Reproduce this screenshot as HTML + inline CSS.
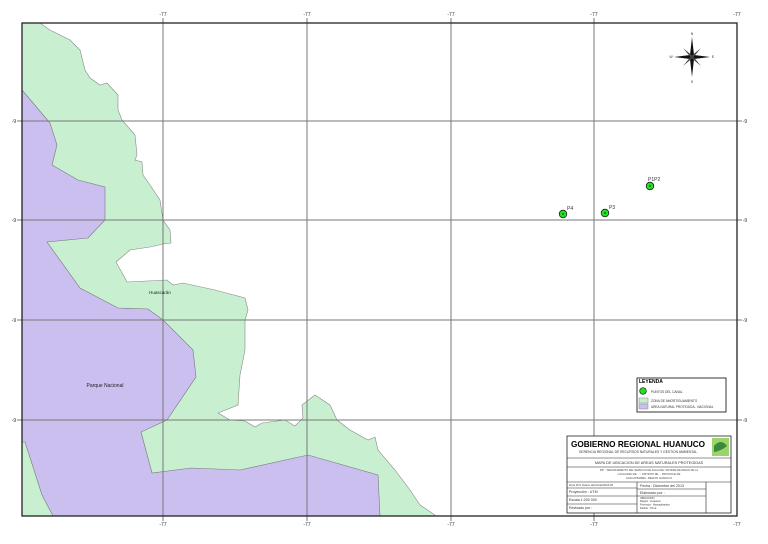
<!DOCTYPE html>
<html><head><meta charset="utf-8"><style>
html,body{margin:0;padding:0;background:#fff;}
svg{display:block;font-family:"Liberation Sans",sans-serif;}
</style></head><body>
<svg width="768" height="544" viewBox="0 0 768 544" xmlns="http://www.w3.org/2000/svg">
<rect width="768" height="544" fill="#fff"/>
<!-- green zone -->
<polygon fill="#c8f0d0" stroke="#888" stroke-width="0.6" points="22,23 40,23 50,30 70,40 80,50 85,70 90,78 100,85 107,83 118,95 118,110 122,120 135,135 137,155 135,160 142,162 143,175 150,185 160,200 163,220 170,230 171,243 163,244 150,247 130,250 116,262 126,280 127,282 167,280 173,285 183,283 215,290 245,298 248,310 245,320 245,350 240,375 238,405 218,413 230,420 245,421 255,427 262,423 285,420 295,426 303,418 302,405 315,395 330,405 337,420 350,430 368,440 375,437 378,450 395,470 410,490 420,505 435,515 435,516 22,516"/>
<!-- purple zone -->
<polygon fill="#cbbff0" stroke="#777" stroke-width="0.6" points="22,90 50,123 57,145 52,165 78,180 105,187 105,220 88,238 47,242 80,288 118,308 148,309 163,320 193,350 196,377 167,420 141,432 152,473 191,468 240,470 308,455 378,475 380,516 53,516 42,495 25,442 22,442"/>
<!-- grid -->
<g stroke="#777" stroke-width="1">
<line x1="163" y1="18" x2="163" y2="521"/><line x1="307" y1="18" x2="307" y2="521"/>
<line x1="451" y1="18" x2="451" y2="521"/><line x1="594" y1="18" x2="594" y2="521"/>
<line x1="17" y1="121" x2="742" y2="121"/><line x1="17" y1="220" x2="742" y2="220"/>
<line x1="17" y1="320" x2="742" y2="320"/><line x1="17" y1="420" x2="742" y2="420"/>
</g>
<rect x="22" y="23" width="715" height="493" fill="none" stroke="#222" stroke-width="1.3"/>
<g font-size="5" fill="#333" text-anchor="middle">
<text x="163" y="16">-77</text><text x="307" y="16">-77</text><text x="451" y="16">-77</text><text x="594" y="16">-77</text><text x="737" y="16">-77</text>
<text x="163" y="526">-77</text><text x="307" y="526">-77</text><text x="451" y="526">-77</text><text x="594" y="526">-77</text><text x="737" y="526">-77</text>
<text x="14" y="123">-9</text><text x="14" y="222">-9</text><text x="14" y="322">-9</text><text x="14" y="422">-9</text>
<text x="745" y="123">-9</text><text x="745" y="222">-9</text><text x="745" y="322">-9</text><text x="745" y="422">-9</text>
</g>
<text x="160" y="294" font-size="4.5" text-anchor="middle" fill="#222">Huascarán</text>
<text x="105" y="387" font-size="5" text-anchor="middle" fill="#222">Parque Nacional</text>
<!-- points -->
<g stroke="#222" stroke-width="0.8" fill="#22e022">
<circle cx="563" cy="214" r="3.8"/><circle cx="605" cy="213" r="3.8"/><circle cx="650" cy="186" r="3.8"/>
</g>
<g fill="#111"><circle cx="563" cy="214" r="0.8"/><circle cx="605" cy="213" r="0.8"/><circle cx="650" cy="186" r="0.8"/></g>
<g font-size="5" fill="#333"><text x="567" y="210">P4</text><text x="609" y="209">P3</text><text x="648" y="181">P1P2</text></g>
<!-- compass -->
<g transform="translate(692,57)">
<polygon points="0,-20 2,-2 0,0 -2,-2" fill="#111"/><polygon points="0,20 2,2 0,0 -2,2" fill="#111"/>
<polygon points="-18,0 -2,-2 0,0 -2,2" fill="#111"/><polygon points="18,0 2,-2 0,0 2,2" fill="#111"/>
<polygon points="9,-9 1.5,0 0,0 0,-1.5" fill="#444"/><polygon points="-9,-9 -1.5,0 0,0 0,-1.5" fill="#444"/>
<polygon points="9,9 1.5,0 0,0 0,1.5" fill="#444"/><polygon points="-9,9 -1.5,0 0,0 0,1.5" fill="#444"/>
<g font-size="3.5" fill="#333" text-anchor="middle"><text x="0" y="-22">N</text><text x="0" y="26">S</text><text x="-21" y="1">W</text><text x="21" y="1">E</text></g>
</g>
<!-- legend -->
<rect x="637" y="378" width="89" height="34" fill="#fff" stroke="#222" stroke-width="0.9"/>
<text x="639" y="383" font-size="5" font-weight="bold">LEYENDA</text>
<circle cx="643" cy="391" r="3.3" fill="#22e022" stroke="#222" stroke-width="0.7"/>
<rect x="639" y="398" width="9" height="5" fill="#c8f0d0" stroke="#888" stroke-width="0.5"/>
<rect x="639" y="404" width="9" height="5" fill="#cbbff0" stroke="#888" stroke-width="0.5"/>
<g font-size="3.2" fill="#333"><text x="651" y="393">PUNTOS DEL CANAL</text><text x="651" y="402">ZONA DE AMORTIGUAMIENTO</text><text x="651" y="408">AREA NATURAL PROTEGIDA - NACIONAL</text></g>
<!-- title block -->
<g fill="#fff" stroke="#222" stroke-width="0.8">
<rect x="567" y="436" width="164" height="77"/>
</g>
<g stroke="#222" stroke-width="0.6" fill="none">
<line x1="567" y1="458" x2="731" y2="458"/><line x1="567" y1="467" x2="731" y2="467"/><line x1="567" y1="482" x2="731" y2="482"/>
<line x1="637" y1="482" x2="637" y2="513"/><line x1="706" y1="482" x2="706" y2="513"/>
<line x1="567" y1="488" x2="637" y2="488"/><line x1="567" y1="496" x2="706" y2="496"/><line x1="567" y1="504" x2="637" y2="504"/><line x1="637" y1="489" x2="706" y2="489"/>
</g>
<rect x="712" y="438" width="17" height="18" fill="#9bd46a"/>
<path d="M714,446 q7,-8 13,0 q-6,5 -13,6z" fill="#3a8a3a"/>
<text x="638" y="447" font-size="8.2" font-weight="bold" text-anchor="middle">GOBIERNO REGIONAL HUANUCO</text>
<text x="638" y="453" font-size="3.3" text-anchor="middle" fill="#333">GERENCIA REGIONAL DE RECURSOS NATURALES Y GESTION AMBIENTAL</text>
<text x="649" y="464" font-size="3.8" text-anchor="middle" fill="#333">MAPA DE UBICACION DE AREAS NATURALES PROTEGIDAS</text>
<g font-size="2.6" fill="#444" text-anchor="middle"><text x="649" y="471">PIP : "MEJORAMIENTO DEL SERVICIO DE AGUA DEL SISTEMA DE RIEGO DE LA</text><text x="649" y="475">LOCALIDAD DE ...", DISTRITO DE ... PROVINCIA DE</text><text x="649" y="479">HUACAYBAMBA - REGION HUANUCO</text></g>
<g font-size="3.6" fill="#333">
<text x="569" y="486" font-size="2.6">Zona 18 S. Datum Horizontal WGS 84</text>
<text x="569" y="493">Proyección : UTM</text>
<text x="569" y="501">Escala 1:200 000</text>
<text x="569" y="509">Revisado por :</text>
<text x="640" y="487">Fecha : Diciembre del 2013</text>
<text x="640" y="494">Elaborado por :</text>
<g font-size="2.6"><text x="640" y="499">UBICACION</text><text x="640" y="502">Region : Huanuco</text><text x="640" y="505.5">Provincia : Huacaybamba</text><text x="640" y="509">Distrito : Pinra</text></g>
</g>
</svg>
</body></html>
